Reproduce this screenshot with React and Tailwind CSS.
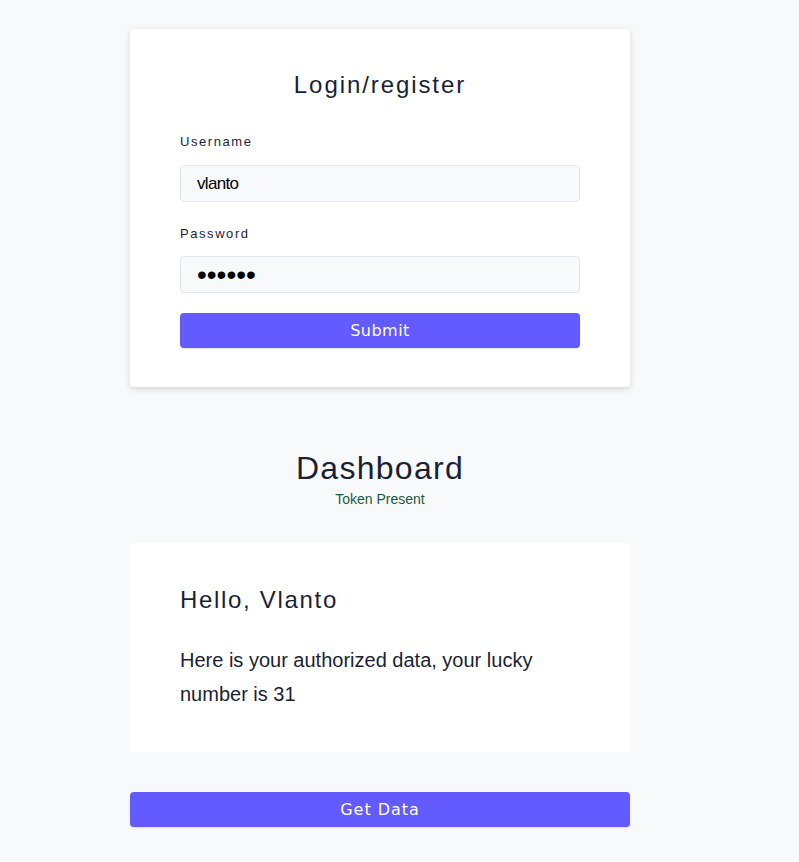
export default function App() {
  return (
    <div
      className="min-h-screen bg-[#f8f9fb] pt-[29px] pb-9"
      style={{ fontFamily: '"Liberation Sans", Arial, sans-serif' }}
    >
      <div className="w-[500px] ml-[130px]">
        {/* login card */}
        <div className="bg-white rounded shadow-[0_2px_6px_rgba(0,0,0,0.15)] px-[50px] pt-[41px] pb-[39px]">
          <h2 className="text-center text-[24px] leading-[30px] tracking-[0.08em] text-[#1a1f36]">
            Login/register
          </h2>
          <label className="block mt-[34px] text-[13px] leading-4 tracking-[0.12em] text-[#1a1f36]">
            Username
          </label>
          <input
            readOnly
            value="vlanto"
            className="block w-full mt-[15px] h-[37px] px-4 bg-[#f8f9fb] border border-[#e3e6ec] rounded text-[17px] tracking-[-0.04em] text-black outline-none"
          />
          <label className="block mt-[24px] text-[13px] leading-4 tracking-[0.12em] text-[#1a1f36]">
            Password
          </label>
          <input
            readOnly
            type="password"
            value="123456"
            className="block w-full mt-[14px] h-[37px] px-4 bg-[#f8f9fb] border border-[#e3e6ec] rounded text-[28px] tracking-[0px] text-black outline-none"
          />
          <button
            className="block w-full mt-[20px] h-[35px] bg-[#635bff] rounded text-white text-[16px] tracking-[0.03em] shadow-[0_1px_2px_rgba(0,0,0,0.12)]"
            style={{ fontFamily: '"DejaVu Sans", Verdana, sans-serif' }}
          >
            Submit
          </button>
        </div>

        {/* dashboard */}
        <div className="mt-[63px] text-center">
          <h1 className="text-[32px] leading-[36px] tracking-[0.04em] text-[#1a1f36]">
            Dashboard
          </h1>
          <p className="mt-[5px] text-[14px] leading-4 text-[#1a5a3c]">Token Present</p>
        </div>

        <div className="mt-[36px] bg-white rounded px-[50px] pt-[42px] pb-[41px]">
          <h3 className="text-[24px] leading-[30px] tracking-[0.07em] text-[#1a1f36]">
            Hello, Vlanto
          </h3>
          <p className="mt-[28px] text-[20px] leading-[34px] text-[#1a1f36] pr-[40px]">
            Here is your authorized data, your lucky number is 31
          </p>
        </div>

        <button
          className="block w-full mt-[40px] h-[35px] bg-[#635bff] rounded text-white text-[16px] tracking-[0.06em] shadow-[0_1px_2px_rgba(0,0,0,0.12)]"
          style={{ fontFamily: '"DejaVu Sans", Verdana, sans-serif' }}
        >
          Get Data
        </button>
      </div>
    </div>
  );
}
